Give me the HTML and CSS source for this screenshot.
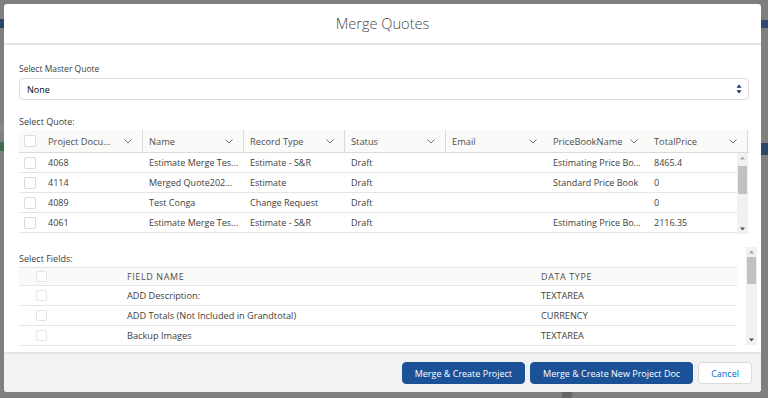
FILE: index.html
```html
<!DOCTYPE html>
<html>
<head>
<meta charset="utf-8">
<link rel="stylesheet" href="styles.css">
</head>
<body>
<div class="page">
  <div class="bg-strip bg-left-navy"></div>
  <div class="bg-strip bg-left-green"></div>
  <div class="bg-strip bg-left-light"></div>
  <div class="bg-strip bg-right-navy"></div>
  <div class="bg-strip bg-right-navy2"></div>
  <div class="bg-strip bg-bottom-dark"></div>
</div>
<div class="modal">
  <header class="modal-header">
    <h2 class="modal-title">Merge Quotes</h2>
  </header>
  <div class="modal-body">
    <div class="top-section">
      <div class="field-label">Select Master Quote</div>
      <div class="select">
        <span>None</span>
        <svg class="select-arrows" width="6" height="10" viewBox="0 0 6 10"><path d="M3 0.5 L5.5 3.8 H0.5 Z M3 9.5 L5.5 6.2 H0.5 Z" fill="#16325c"/></svg>
      </div>
      <div class="section-label">Select Quote:</div>
      <div class="qtable">
        <div class="qhead">
          <div class="qcell qcheck"><span class="checkbox"></span></div>
          <div class="qcell qh bordered"><span>Project Docu...</span><svg class="chev" width="8" height="5" viewBox="0 0 8 5"><path d="M0.5 0.5 L4 4 L7.5 0.5" fill="none" stroke="#706e6b" stroke-width="1"/></svg></div>
          <div class="qcell qh bordered"><span>Name</span><svg class="chev" width="8" height="5" viewBox="0 0 8 5"><path d="M0.5 0.5 L4 4 L7.5 0.5" fill="none" stroke="#706e6b" stroke-width="1"/></svg></div>
          <div class="qcell qh bordered"><span>Record Type</span><svg class="chev" width="8" height="5" viewBox="0 0 8 5"><path d="M0.5 0.5 L4 4 L7.5 0.5" fill="none" stroke="#706e6b" stroke-width="1"/></svg></div>
          <div class="qcell qh bordered"><span>Status</span><svg class="chev" width="8" height="5" viewBox="0 0 8 5"><path d="M0.5 0.5 L4 4 L7.5 0.5" fill="none" stroke="#706e6b" stroke-width="1"/></svg></div>
          <div class="qcell qh"><span>Email</span><svg class="chev" width="8" height="5" viewBox="0 0 8 5"><path d="M0.5 0.5 L4 4 L7.5 0.5" fill="none" stroke="#706e6b" stroke-width="1"/></svg></div>
          <div class="qcell qh"><span>PriceBookName</span><svg class="chev" width="8" height="5" viewBox="0 0 8 5"><path d="M0.5 0.5 L4 4 L7.5 0.5" fill="none" stroke="#706e6b" stroke-width="1"/></svg></div>
          <div class="qcell qh qlast bordered-right"><span>TotalPrice</span><svg class="chev" width="8" height="5" viewBox="0 0 8 5"><path d="M0.5 0.5 L4 4 L7.5 0.5" fill="none" stroke="#706e6b" stroke-width="1"/></svg></div>
        </div>
        <div class="qbody">
          <div class="qrows">
            <div class="qrow">
              <div class="qcell qcheck"><span class="checkbox"></span></div>
              <div class="qcell">4068</div>
              <div class="qcell">Estimate Merge Tes...</div>
              <div class="qcell">Estimate - S&amp;R</div>
              <div class="qcell">Draft</div>
              <div class="qcell"></div>
              <div class="qcell">Estimating Price Bo...</div>
              <div class="qcell qlast">8465.4</div>
            </div>
            <div class="qrow">
              <div class="qcell qcheck"><span class="checkbox"></span></div>
              <div class="qcell">4114</div>
              <div class="qcell">Merged Quote202...</div>
              <div class="qcell">Estimate</div>
              <div class="qcell">Draft</div>
              <div class="qcell"></div>
              <div class="qcell">Standard Price Book</div>
              <div class="qcell qlast">0</div>
            </div>
            <div class="qrow">
              <div class="qcell qcheck"><span class="checkbox"></span></div>
              <div class="qcell">4089</div>
              <div class="qcell">Test Conga</div>
              <div class="qcell">Change Request</div>
              <div class="qcell">Draft</div>
              <div class="qcell"></div>
              <div class="qcell"></div>
              <div class="qcell qlast">0</div>
            </div>
            <div class="qrow">
              <div class="qcell qcheck"><span class="checkbox"></span></div>
              <div class="qcell">4061</div>
              <div class="qcell">Estimate Merge Tes...</div>
              <div class="qcell">Estimate - S&amp;R</div>
              <div class="qcell">Draft</div>
              <div class="qcell"></div>
              <div class="qcell">Estimating Price Bo...</div>
              <div class="qcell qlast">2116.35</div>
            </div>
          </div>
          <div class="scrollbar sb-quotes">
            <svg class="sb-arrow" width="11" height="10" viewBox="0 0 11 10"><path d="M5.5 3.5 L8 6.5 H3 Z" fill="#a3a3a3"/></svg>
            <div class="sb-track"><div class="sb-thumb"></div></div>
            <svg class="sb-arrow" width="11" height="10" viewBox="0 0 11 10"><path d="M5.5 6.5 L8 3.5 H3 Z" fill="#505050"/></svg>
          </div>
        </div>
      </div>
    </div>
    <div class="fields-section">
      <div class="fields-content">
        <div class="section-label fields-label">Select Fields:</div>
        <div class="ftable">
          <div class="frow fhead">
            <div class="fcell fcheck"><span class="checkbox light"></span></div>
            <div class="fcell fname">FIELD NAME</div>
            <div class="fcell ftype">DATA TYPE</div>
          </div>
          <div class="frow">
            <div class="fcell fcheck"><span class="checkbox light"></span></div>
            <div class="fcell fname">ADD Description:</div>
            <div class="fcell ftype">TEXTAREA</div>
          </div>
          <div class="frow">
            <div class="fcell fcheck"><span class="checkbox light"></span></div>
            <div class="fcell fname">ADD Totals (Not Included in Grandtotal)</div>
            <div class="fcell ftype">CURRENCY</div>
          </div>
          <div class="frow">
            <div class="fcell fcheck"><span class="checkbox light"></span></div>
            <div class="fcell fname">Backup Images</div>
            <div class="fcell ftype">TEXTAREA</div>
          </div>
        </div>
      </div>
      <div class="scrollbar sb-fields">
        <svg class="sb-arrow" width="11" height="10" viewBox="0 0 11 10"><path d="M5.5 3.5 L8 6.5 H3 Z" fill="#a3a3a3"/></svg>
        <div class="sb-track"><div class="sb-thumb"></div></div>
        <svg class="sb-arrow" width="11" height="10" viewBox="0 0 11 10"><path d="M5.5 6.5 L8 3.5 H3 Z" fill="#505050"/></svg>
      </div>
    </div>
  </div>
  <footer class="modal-footer">
    <button class="btn btn-brand">Merge &amp; Create Project</button>
    <button class="btn btn-brand">Merge &amp; Create New Project Doc</button>
    <button class="btn btn-neutral">Cancel</button>
  </footer>
</div>
</body>
</html>
```

FILE: styles.css
```css
* { box-sizing: border-box; }
html, body {
  margin: 0;
  padding: 0;
}
body {
  width: 768px;
  height: 398px;
  overflow: hidden;
  background: #7f7f7f;
  font-family: "Open Sans", "Liberation Sans", sans-serif;
  color: #3e3e3c;
  position: relative;
}
.page {
  position: absolute;
  inset: 0;
}
.bg-strip { position: absolute; }
.bg-left-navy { left: 0; top: 19px; width: 4px; height: 9px; background: #2a4669; }
.bg-left-green { left: 0; top: 142px; width: 4px; height: 9px; background: #3a6e4c; }
.bg-left-light { left: 0; top: 125px; width: 4px; height: 8px; background: #8a8a8a; }
.bg-right-navy { right: 0; top: 20px; width: 7px; height: 8px; background: #2e4a6e; }
.bg-right-navy2 { right: 0; top: 143px; width: 7px; height: 12px; background: #2a4669; }
.bg-bottom-dark { left: 562px; top: 392px; width: 10px; height: 6px; background: #666; }

.modal {
  position: absolute;
  left: 4px;
  top: 4px;
  width: 757px;
  height: 388px;
  background: #fff;
  border-radius: 3px;
  display: flex;
  flex-direction: column;
  overflow: hidden;
}
.modal-header {
  height: 41px;
  flex: none;
  border-bottom: 2px solid #e5e5e5;
  display: flex;
  align-items: center;
  justify-content: center;
}
.modal-title {
  margin: 0;
  font-size: 14.6px;
  font-weight: 300;
  color: #4a4a48;
  padding-bottom: 2px;
}
.modal-body {
  flex: 1;
  padding: 0 4px 0 15px;
  display: flex;
  flex-direction: column;
}
.top-section {
  margin-right: 8px;
}
.field-label {
  font-size: 8.5px;
  margin-top: 18px;
  line-height: 12px;
  color: #3e3e3c;
}
.select {
  margin-top: 3px;
  height: 22px;
  border: 1px solid #dddbda;
  border-radius: 4px;
  display: flex;
  align-items: center;
  justify-content: space-between;
  padding: 0 6px 0 7px;
  font-size: 9px;
  color: #080707;
}
.select-arrows { display: block; }
.section-label {
  font-size: 9px;
  line-height: 12px;
  margin-top: 16px;
  color: #3e3e3c;
}
.qtable {
  margin-top: 2px;
  width: 730px;
}
.qhead {
  display: flex;
  height: 23px;
  background: #fafaf9;
  border-bottom: 1px solid #dddbda;
}
.qcell {
  width: 101px;
  flex: none;
  display: flex;
  align-items: center;
  padding-left: 6px;
  font-size: 9px;
  white-space: nowrap;
  overflow: hidden;
  color: #3e3e3c;
}
.qcheck {
  width: 23px;
  padding-left: 5px;
}
.qlast { width: 100px; }
.qh {
  justify-content: space-between;
  padding-right: 10px;
  color: #514f4d;
  font-weight: 500;
  font-size: 9.3px;
}
.qh.bordered { border-right: 1px solid #dddbda; }
.qh.bordered-right { border-right: 1px solid #dddbda; }
.qh .chev { flex: none; }
.checkbox {
  display: block;
  width: 12px;
  height: 12px;
  border: 1px solid #dddbda;
  border-radius: 2px;
  background: #fff;
}
.checkbox.light {
  width: 11px;
  height: 11px;
  border-color: #e5e5e5;
}
.qbody {
  display: flex;
  height: 81px;
  position: relative;
}
.qrows {
  width: 730px;
  flex: none;
}
.qrow {
  display: flex;
  height: 20px;
  border-bottom: 1px solid #e5e5e5;
}
.scrollbar {
  width: 11px;
  background: #f1f1f1;
  display: flex;
  flex-direction: column;
}
.sb-quotes {
  position: absolute;
  right: 1px;
  top: 0;
  bottom: 0;
}
.sb-arrow { display: block; flex: none; }
.sb-track {
  flex: 1;
  position: relative;
}
.sb-thumb {
  position: absolute;
  left: 1px;
  right: 1px;
  top: 3px;
  height: 28px;
  background: #c1c1c1;
}
.fields-section {
  display: flex;
  margin-top: 13px;
  height: 100px;
  gap: 9px;
}
.fields-content {
  width: 718px;
  flex: none;
}
.fields-label {
  margin-top: 6px;
}
.ftable {
  margin-top: 2px;
}
.frow {
  display: flex;
  height: 20px;
  border-bottom: 1px solid #e5e5e5;
}
.fhead {
  height: 19px;
  background: #fafaf9;
  border-top: 1px solid #e5e5e5;
}
.fcell {
  display: flex;
  align-items: center;
  font-size: 9.2px;
  color: #3e3e3c;
  white-space: nowrap;
}
.fhead .fcell {
  letter-spacing: 0.6px;
  color: #514f4d;
  font-size: 9px;
}
.fcheck {
  width: 100px;
  padding-left: 17px;
}
.fname {
  width: 414px;
  padding-left: 8px;
}
.ftype {
  flex: 1;
  padding-left: 8px;
}
.sb-fields {
  height: 98px;
}
.sb-fields .sb-thumb {
  top: 0;
  height: 27px;
}

.modal-footer {
  height: 40px;
  flex: none;
  background: #f3f2f2;
  border-top: 2px solid #e5e5e5;
  display: flex;
  justify-content: flex-end;
  align-items: center;
  gap: 5px;
  padding-right: 9px;
}
.btn {
  height: 22px;
  border-radius: 4px;
  font-family: "Open Sans", "Liberation Sans", sans-serif;
  font-size: 9px;
  padding: 0 12px;
  cursor: pointer;
}
.btn-brand {
  background: #1b5297;
  border: 1px solid #1b5297;
  color: #fff;
}
.btn-neutral {
  background: #fff;
  border: 1px solid #dddbda;
  color: #0070d2;
}
```
